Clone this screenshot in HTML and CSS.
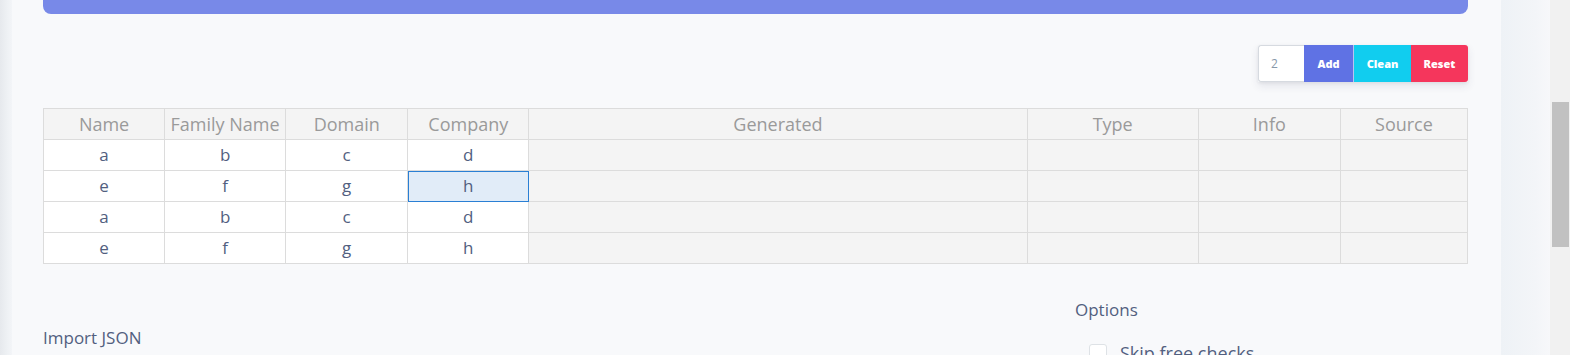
FILE: index.html
```html
<!DOCTYPE html>
<html lang="en">
<head>
  <meta charset="UTF-8">
  <title>Email generator</title>
  <link rel="stylesheet" href="styles.css">
</head>
<body>
  <div class="side-left"></div>
  <div class="main">
    <!-- header card bottom -->
    <div class="top-bar"></div>

    <!-- rows toolbar -->
    <div class="toolbar">
      <div class="btn-group">
        <input type="text" class="rows-input" value="2">
        <button class="btn btn-add">Add</button>
        <button class="btn btn-clean">Clean</button>
        <button class="btn btn-reset">Reset</button>
      </div>
    </div>

    <!-- data grid -->
    <table class="grid">
      <colgroup>
        <col style="width: 121px">
        <col style="width: 121px">
        <col style="width: 122px">
        <col style="width: 121px">
        <col style="width: 498px">
        <col style="width: 171px">
        <col style="width: 142px">
        <col style="width: 127px">
      </colgroup>
      <thead>
        <tr>
          <th>Name</th>
          <th>Family Name</th>
          <th>Domain</th>
          <th>Company</th>
          <th>Generated</th>
          <th>Type</th>
          <th>Info</th>
          <th>Source</th>
        </tr>
      </thead>
      <tbody>
        <tr>
          <td>a</td><td>b</td><td>c</td><td>d</td>
          <td class="ro"></td><td class="ro"></td><td class="ro"></td><td class="ro"></td>
        </tr>
        <tr>
          <td>e</td><td>f</td><td>g</td><td class="current">h</td>
          <td class="ro"></td><td class="ro"></td><td class="ro"></td><td class="ro"></td>
        </tr>
        <tr>
          <td>a</td><td>b</td><td>c</td><td>d</td>
          <td class="ro"></td><td class="ro"></td><td class="ro"></td><td class="ro"></td>
        </tr>
        <tr>
          <td>e</td><td>f</td><td>g</td><td>h</td>
          <td class="ro"></td><td class="ro"></td><td class="ro"></td><td class="ro"></td>
        </tr>
      </tbody>
    </table>

    <div class="bottom">
      <div class="import">
        <h6 class="label">Import JSON</h6>
      </div>
      <div class="options">
        <h6 class="label">Options</h6>
        <label class="check">
          <span class="box"></span>
          <span>Skip free checks</span>
        </label>
      </div>
    </div>
  </div>
  <div class="side-right"></div>
  <div class="scrollbar">
    <div class="thumb"></div>
  </div>
</body>
</html>
```

FILE: styles.css
```css
/* page frame */
body {
  margin: 0;
  padding: 0;
  height: 355px;
  overflow: hidden;
  display: flex;
  background-color: #f1f3f6;
  font-family: "Open Sans", "Liberation Sans", sans-serif;
  color: #525f7f;
}

.side-left {
  flex: 0 0 12px;
  background: linear-gradient(to right, #e6e9ed, #eef1f4 60%, #f3f5f8);
}

.main {
  flex: 1;
  min-width: 0;
  padding: 0 33px 0 31px;
  background-color: #f8f9fb;
}

.side-right {
  flex: 0 0 49px;
  background: linear-gradient(to right, #eef2f6, #f3f5f8 70%, #f7f8fa);
}

.scrollbar {
  flex: 0 0 20px;
  background-color: #f1f1f1;
  padding-top: 102px;
}
.scrollbar .thumb {
  margin-left: 2px;
  width: 17px;
  height: 145px;
  background-color: #c1c1c1;
}

/* purple bar */
.top-bar {
  height: 14px;
  background-color: #7889e8;
  border-radius: 0 0 8px 8px;
}

/* toolbar */
.toolbar {
  display: flex;
  justify-content: flex-end;
  margin-top: 31px;
}
.btn-group {
  display: flex;
  height: 37px;
  box-shadow: 0 4px 8px rgba(50, 50, 93, 0.1), 0 1px 3px rgba(0, 0, 0, 0.06);
}
.rows-input {
  width: 46px;
  box-sizing: border-box;
  border: 1px solid #d6dae0;
  border-right: none;
  border-radius: 3px 0 0 3px;
  padding: 0 0 0 12px;
  font-family: "Open Sans", sans-serif;
  font-size: 12px;
  color: #8898aa;
  background: #fff;
  outline: none;
}
.btn {
  border: none;
  margin: 0;
  padding: 0;
  color: #fff;
  font-family: "Open Sans", sans-serif;
  font-weight: 800;
  font-size: 11px;
  cursor: pointer;
}
.btn-add {
  width: 50px;
  background-color: #5f72e4;
  border-right: 1px solid #b9c2ef;
}
.btn-clean {
  width: 57px;
  background-color: #11cdef;
}
.btn-reset {
  width: 57px;
  background-color: #f5365c;
  border-radius: 0 3px 3px 0;
}

/* grid */
.grid {
  margin-top: 26px;
  width: 100%;
  border-collapse: separate;
  border-spacing: 0;
  border-top: 1px solid #dcdcdc;
  border-left: 1px solid #dcdcdc;
  table-layout: fixed;
  font-size: 17px;
}
.grid th,
.grid td {
  height: 30px;
  padding: 0;
  border-right: 1px solid #dcdcdc;
  border-bottom: 1px solid #dcdcdc;
  text-align: center;
  line-height: 30px;
  white-space: nowrap;
  overflow: hidden;
}
.grid th {
  background-color: #f4f4f4;
  color: #9a9a9a;
  font-weight: 400;
  font-size: 18px;
}
.grid td {
  background-color: #fff;
  color: #525f7f;
}
.grid td.ro {
  background-color: #f4f4f4;
}
.grid td.current {
  background-color: #e1ecf8;
  border-right-color: #2a7fd4;
  border-bottom-color: #2a7fd4;
  box-shadow: inset 1px 1px 0 #2a7fd4;
}

/* bottom */
.bottom {
  display: grid;
  grid-template-columns: 1032px 1fr;
}
.label {
  margin: 0;
  font-size: 17px;
  font-weight: 400;
  color: #525f7f;
}
.import .label {
  margin-top: 62px;
}
.options .label {
  margin-top: 34px;
}
.check {
  display: flex;
  align-items: center;
  gap: 13px;
  margin-top: 20px;
  margin-left: 14px;
  font-size: 18px;
}
.check .box {
  width: 16px;
  height: 16px;
  border: 1px solid #dee2e6;
  border-radius: 3px;
  background: #fff;
}
```
